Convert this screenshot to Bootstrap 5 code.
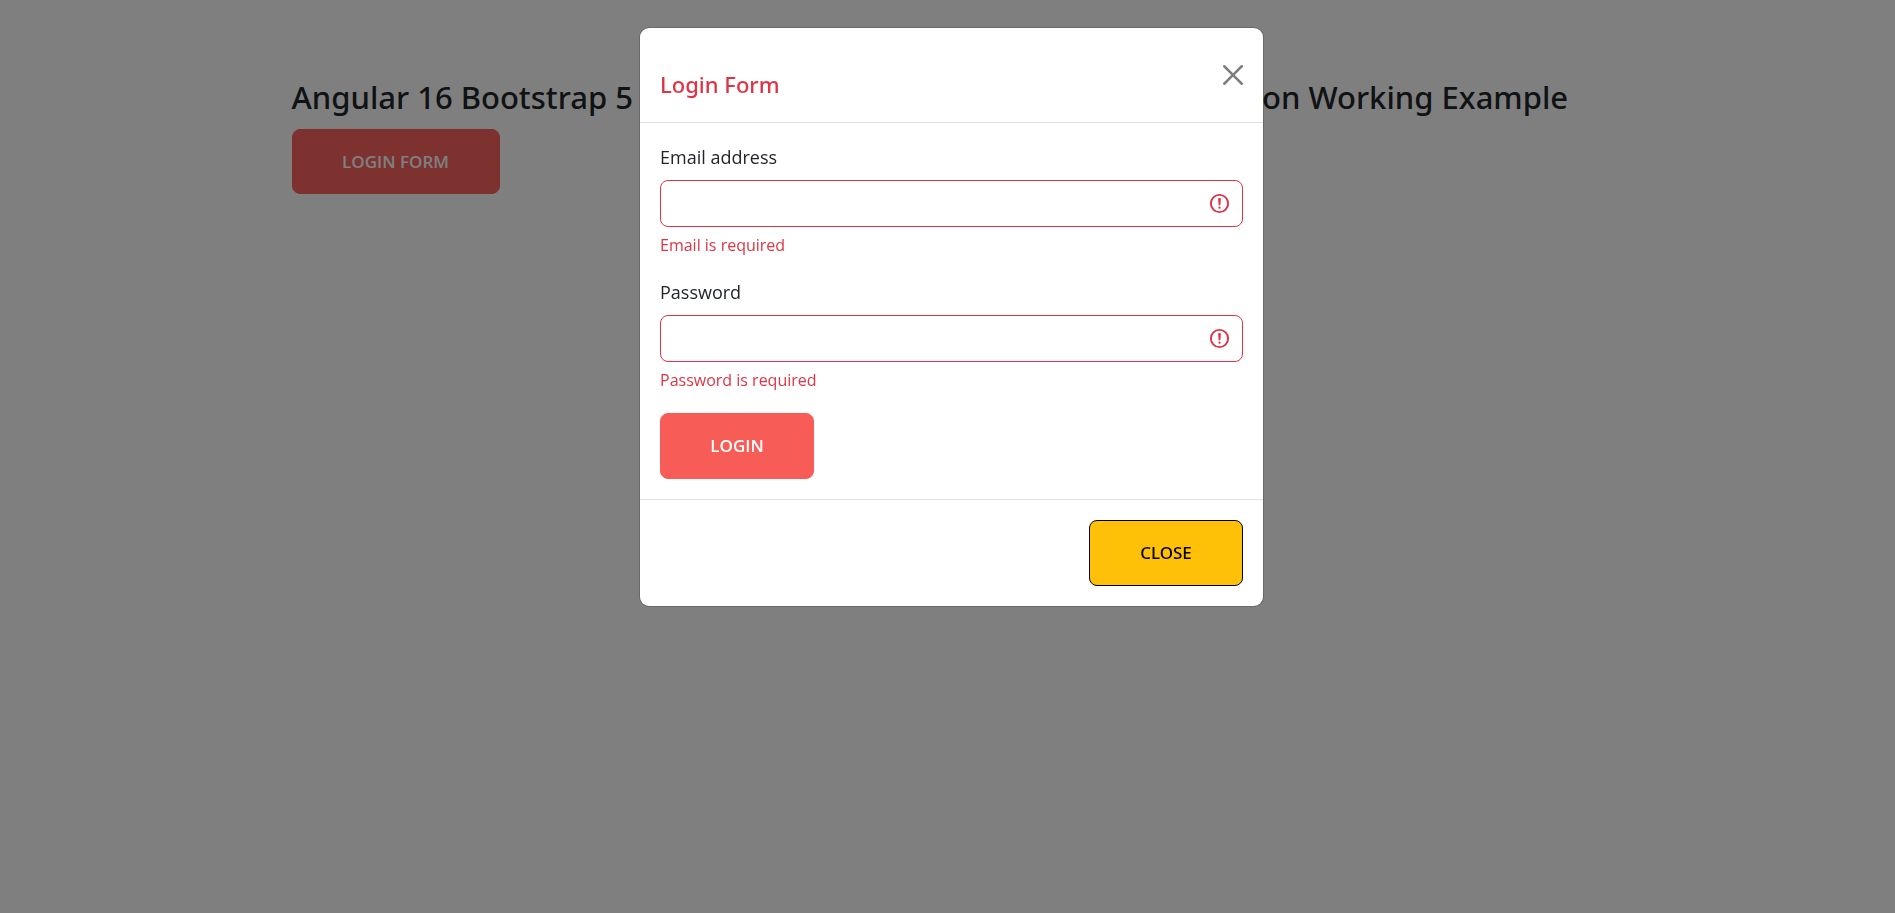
<!DOCTYPE html>
<html lang="en">
<head>
<meta charset="utf-8">
<meta name="viewport" content="width=device-width, initial-scale=1">
<title>Login Form</title>
<link href="https://cdn.jsdelivr.net/npm/bootstrap@5.3.0/dist/css/bootstrap.min.css" rel="stylesheet">
<style>
  :root { --app-font: "Segoe UI", "Open Sans", "Noto Sans", sans-serif; --head-font: "Segoe UI", "Noto Sans", "Open Sans", sans-serif; }
  body { font-family: var(--app-font); font-size: 18px; line-height: 29px; }
  .page-shell, .modal { padding-left: 8px; }
  .page-box { max-width: 1320px; padding-top: 77px; }
  .page-title { font-family: var(--head-font); font-weight: 500; font-size: 31px; line-height: 40px; margin-bottom: 12px; white-space: nowrap; }
  .btn-big { font-size: 17px; line-height: 26px; font-weight: 600; padding: 19px 0; border-radius: 8px; text-transform: uppercase; }
  .btn-coral { --bs-btn-color: #fff; --bs-btn-bg: #f75c56; --bs-btn-border-color: #f75c56; --bs-btn-hover-color: #fff; --bs-btn-hover-bg: #e84c47; --bs-btn-hover-border-color: #e84c47; }
  .btn-open { width: 208px; line-height: 25px; --bs-btn-bg: #fb6461; --bs-btn-border-color: #fb6461; }
  .btn-form { width: 154px; }
  .btn-dismiss { --bs-btn-border-color: #000; font-family: var(--head-font); font-weight: 500; }
  .modal { --bs-modal-width: 625px; --bs-modal-padding: 20px; --bs-modal-header-padding: 20px; --bs-modal-border-radius: 10px; }
  .modal-dialog { margin-top: 27px; }
  .modal-header { height: 95px; }
  .modal-title { font-family: var(--head-font); font-weight: 500; font-size: 22px; line-height: 30px; padding-top: 18px; }
  .modal-footer { padding: 20px; }
  .modal-footer > * { margin: 0; }
  .modal-header .btn-close { font-size: 20px; padding: 10px; margin: -10px -10px -10px auto; }
  .form-label { margin-bottom: 8px; }
  .form-control { height: 47px; border-radius: 8px; }
  .form-control.is-invalid { background-size: 23px 23px; background-position: right 11px center; }
  .invalid-feedback { font-size: 16px; line-height: 26px; margin-top: 5px; color: #dc3545; }
  .field-row { margin-bottom: 20px; }
</style>
</head>
<body>
<div class="page-shell">
  <main class="page-box container-fluid px-0">
    <h1 class="page-title">Angular 16 Bootstrap 5 Modal Popup Reactive Forms with Validation Working Example</h1>
    <button type="button" class="btn btn-coral btn-big btn-open">Login Form</button>
  </main>
</div>

<div class="modal-backdrop fade show"></div>
<div class="modal d-block" tabindex="-1" role="dialog" aria-modal="true" aria-labelledby="loginTitle">
  <div class="modal-dialog">
    <div class="modal-content">
      <div class="modal-header">
        <h2 class="modal-title text-danger" id="loginTitle">Login Form</h2>
        <button type="button" class="btn-close" aria-label="Close"></button>
      </div>
      <div class="modal-body">
        <form novalidate>
          <div class="field-row">
            <label for="email" class="form-label d-block">Email address</label>
            <input type="email" class="form-control is-invalid" id="email" aria-describedby="emailError">
            <div class="invalid-feedback" id="emailError">Email is required</div>
          </div>
          <div class="field-row">
            <label for="password" class="form-label d-block">Password</label>
            <input type="password" class="form-control is-invalid" id="password" aria-describedby="passwordError">
            <div class="invalid-feedback" id="passwordError">Password is required</div>
          </div>
          <button type="submit" class="btn btn-coral btn-big btn-form d-block">Login</button>
        </form>
      </div>
      <div class="modal-footer">
        <button type="button" class="btn btn-warning btn-big btn-form btn-dismiss">Close</button>
      </div>
    </div>
  </div>
</div>
<script src="https://cdn.jsdelivr.net/npm/bootstrap@5.3.0/dist/js/bootstrap.bundle.min.js"></script>
</body>
</html>
